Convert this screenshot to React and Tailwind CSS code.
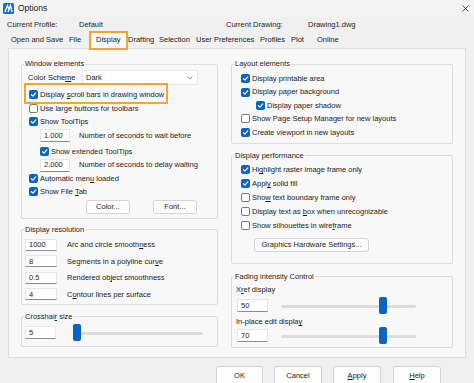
import React from "react";

const Check = ({ on }) =>
  on ? (
    <span className="w-[9px] h-[9px] rounded-[2px] bg-[#0b63c4] flex items-center justify-center shrink-0">
      <svg width="7" height="7" viewBox="0 0 10 10">
        <path d="M2 5.3 L4.2 7.4 L8.3 2.7" fill="none" stroke="white" strokeWidth="1.7" strokeLinecap="round" strokeLinejoin="round" />
      </svg>
    </span>
  ) : (
    <span className="w-[9px] h-[9px] rounded-[2px] bg-white border border-[#7a7a7a] shrink-0" />
  );

function CheckRow({ on, children, className = "" }) {
  return (
    <div className={`flex items-center gap-[2px] ${className}`}>
      <Check on={on} />
      <span>{children}</span>
    </div>
  );
}

function Field({ value, className = "" }) {
  return (
    <div className={`bg-white border border-[#e6e6e6] border-b-[#8c8c8c] flex items-center pl-[3px] shrink-0 ${className}`}>
      {value}
    </div>
  );
}

function Btn({ children, className = "" }) {
  return (
    <div className={`bg-[#fdfdfd] border border-[#d3d3d3] rounded-[3px] flex items-center justify-center shrink-0 ${className}`}>
      {children}
    </div>
  );
}

function Slider({ pos, className = "" }) {
  return (
    <div className={`relative h-[18px] shrink-0 ${className}`}>
      <div className="absolute left-0 right-0 top-[8px] h-[3px] rounded-full bg-[#dcdcdc]" />
      <div className="absolute top-0 w-[8px] h-[17px] rounded-[2px] bg-[#0b63c4]" style={{ left: pos }} />
    </div>
  );
}

function Group({ title, children, className = "" }) {
  return (
    <fieldset className={`border border-[#dddddd] rounded-[2px] p-0 m-0 min-w-0 ${className}`}>
      <legend className="ml-[2px] px-[1px] leading-[10px]">{title}</legend>
      {children}
    </fieldset>
  );
}

export default function App() {
  return (
    <div className="w-[474px] h-[383px] overflow-hidden bg-[#f0f0f0] text-[#1b1b1b] text-[7.5px] font-['Liberation_Sans',Arial,sans-serif]">
      {/* title bar */}
      <div className="h-[17px] flex items-center bg-[#f3f3f3]">
        <svg className="ml-[3px]" width="11" height="11" viewBox="0 0 11 11">
          <rect width="11" height="11" rx="1.5" fill="#1a6fd0" />
          <path d="M2 9 L4.5 2.5 L6 6.5 M5 9 L7.5 2.5 L9 9" fill="none" stroke="white" strokeWidth="1.3" />
        </svg>
        <span className="ml-[4px] text-[8.5px]">Options</span>
        <svg className="ml-auto mr-[5px]" width="7" height="7" viewBox="0 0 7 7">
          <path d="M0.5 0.5 L6.5 6.5 M6.5 0.5 L0.5 6.5" stroke="#333" strokeWidth="0.8" />
        </svg>
      </div>

      {/* profile row */}
      <div className="mt-[2px] h-[12px] flex items-center pl-[7px]">
        <span className="w-[72px]">Current Profile:</span>
        <span className="w-[147px]">Default</span>
        <span className="w-[82px]">Current Drawing:</span>
        <span>Drawing1.dwg</span>
      </div>

      {/* tabs */}
      <div className="mt-[1px] h-[16px] flex items-center pl-[11px] relative z-10">
        <span className="w-[58px]">Open and Save</span>
        <span className="w-[20px]">File</span>
        <span className="w-[39px] h-[19px] -mt-[1px] self-start border-2 border-[#f2a531] bg-[#fafafa] flex items-center pl-[5px] pb-[2px]">Display</span>
        <span className="w-[31px]">Drafting</span>
        <span className="w-[37px]">Selection</span>
        <span className="w-[64px]">User Preferences</span>
        <span className="w-[31px]">Profiles</span>
        <span className="w-[26px]">Plot</span>
        <span>Online</span>
      </div>

      {/* panel */}
      <div className="mx-[8px] h-[310px] border border-[#dedede] bg-[#f8f8f8] pt-[10px] px-[12px] flex gap-[13px]">
        {/* left column */}
        <div className="w-[197px] flex flex-col">
          <Group title="Window elements">
            <div className="mt-[1px] h-[15px] flex items-center pl-[6px]">
              <span className="w-[54px]">Color Sche<u>m</u>e</span>
              <div className="w-[116px] h-[15px] bg-white border border-[#e6e6e6] flex items-center justify-between pl-[3px] pr-[4px]">
                <span>Dark</span>
                <svg width="6" height="4" viewBox="0 0 6 4">
                  <path d="M0.5 0.5 L3 3 L5.5 0.5" fill="none" stroke="#777" strokeWidth="0.8" />
                </svg>
              </div>
            </div>
            <div className="mt-[3px] relative">
              <div className="absolute left-[2px] -top-[5px] w-[144px] h-[21px] border-2 border-[#f2a531]" />
              <CheckRow on className="h-[13.5px] pl-[7px]">
                Display <u>s</u>croll bars in drawing window
              </CheckRow>
            </div>
            <CheckRow on={false} className="h-[13.5px] pl-[7px]">Use large buttons for toolbars</CheckRow>
            <CheckRow on className="h-[13.5px] pl-[7px]">Show ToolTips</CheckRow>
            <div className="h-[14px] flex items-center pl-[18px]">
              <Field value="1.000" className="w-[30px] h-[13px]" />
              <span className="ml-[9px]">Number of seconds to wait before</span>
            </div>
            <CheckRow on className="mt-[2px] h-[14px] pl-[18px]">Show extended ToolTips</CheckRow>
            <div className="h-[13px] flex items-center pl-[18px]">
              <Field value="2.000" className="w-[30px] h-[13px]" />
              <span className="ml-[9px]">Number of seconds to delay waiting</span>
            </div>
            <CheckRow on className="h-[13.5px] pl-[7px]">Automatic men<u>u</u> loaded</CheckRow>
            <CheckRow on className="h-[13.5px] pl-[7px]">Show File <u>T</u>ab</CheckRow>
            <div className="mt-[1px] mb-[4px] h-[14px] flex pl-[64px]">
              <Btn className="w-[44px] h-[14px]">Color...</Btn>
              <Btn className="ml-[23px] w-[44px] h-[14px]">Font...</Btn>
            </div>
          </Group>

          <Group title="Display resolution" className="mt-[6px]">
            <div className="mt-[2px] mb-[1px] flex flex-col">
              {[
                ["1000", <>Arc and circle smooth<u>n</u>ess</>],
                ["8", <>Segments in a polyline cur<u>v</u>e</>],
                ["0.5", <>Rendered ob<u>j</u>ect smoothness</>],
                ["4", <>C<u>o</u>ntour lines per surface</>],
              ].map(([v, label], i) => (
                <div key={i} className="h-[16.5px] flex items-center pl-[3px]">
                  <Field value={v} className="w-[32px] h-[12px]" />
                  <span className="ml-[10px]">{label}</span>
                </div>
              ))}
            </div>
          </Group>

          <Group title={<>Crosshai<u>r</u> size</>} className="mt-[7px]">
            <div className="mt-[2px] mb-[4px] h-[18px] flex items-center pl-[3px]">
              <Field value="5" className="w-[31px] h-[13px]" />
              <Slider pos={0} className="ml-[17px] w-[130px]" />
            </div>
          </Group>
        </div>

        {/* right column */}
        <div className="w-[222px] flex flex-col">
          <Group title="Layout elements">
            <div className="mt-[3px] mb-[4px] flex flex-col">
              <CheckRow on className="h-[13.4px] pl-[9px]">Display printable area</CheckRow>
              <CheckRow on className="h-[13.4px] pl-[9px]">Display paper background</CheckRow>
              <CheckRow on className="h-[13.4px] pl-[24px]">Display paper shadow</CheckRow>
              <CheckRow on={false} className="h-[13.4px] pl-[9px]">Show Page Setup Manager for new layouts</CheckRow>
              <CheckRow on className="h-[13.4px] pl-[9px]">Create viewport in new layouts</CheckRow>
            </div>
          </Group>

          <Group title="Display performance" className="mt-[7px]">
            <div className="mt-[2px] flex flex-col">
              <CheckRow on className="h-[14px] pl-[9px]">Hi<u>g</u>hlight raster image frame only</CheckRow>
              <CheckRow on className="h-[14px] pl-[9px]">Appl<u>y</u> solid fill</CheckRow>
              <CheckRow on={false} className="h-[14px] pl-[9px]">Sho<u>w</u> text boundary frame only</CheckRow>
              <CheckRow on={false} className="h-[14px] pl-[9px]">Display text as <u>b</u>ox when unrecognizable</CheckRow>
              <CheckRow on={false} className="h-[14px] pl-[9px]">Show silhouettes in wire<u>f</u>rame</CheckRow>
            </div>
            <div className="mt-[5px] mb-[11px] pl-[22px] flex">
              <Btn className="w-[115px] h-[14px]">Graphics Hardware Settings...</Btn>
            </div>
          </Group>

          <Group title="Fading intensity Control" className="mt-[8px]">
            <div className="mt-[2px] h-[12px] flex items-center pl-[4px]">
              X<u>r</u>ef display
            </div>
            <div className="mt-[2px] h-[16px] flex items-center pl-[5px]">
              <Field value="50" className="w-[31px] h-[13px]" />
              <Slider pos={98} className="ml-[13px] w-[135px]" />
            </div>
            <div className="mt-[2px] h-[12px] flex items-center pl-[4px]">
              In-place edit displa<u>y</u>
            </div>
            <div className="mb-[3px] h-[16px] flex items-center pl-[5px]">
              <Field value="70" className="w-[31px] h-[13px]" />
              <Slider pos={98} className="ml-[13px] w-[135px]" />
            </div>
          </Group>
        </div>
      </div>

      {/* bottom buttons */}
      <div className="mt-[8px] flex pl-[216px]">
        <Btn className="w-[47px] h-[19px] border-[#0b63c4]">OK</Btn>
        <Btn className="ml-[11px] w-[48px] h-[19px]">Cancel</Btn>
        <Btn className="ml-[11px] w-[48px] h-[19px]"><span><u>A</u>pply</span></Btn>
        <Btn className="ml-[12px] w-[48px] h-[19px]"><span><u>H</u>elp</span></Btn>
      </div>
    </div>
  );
}
